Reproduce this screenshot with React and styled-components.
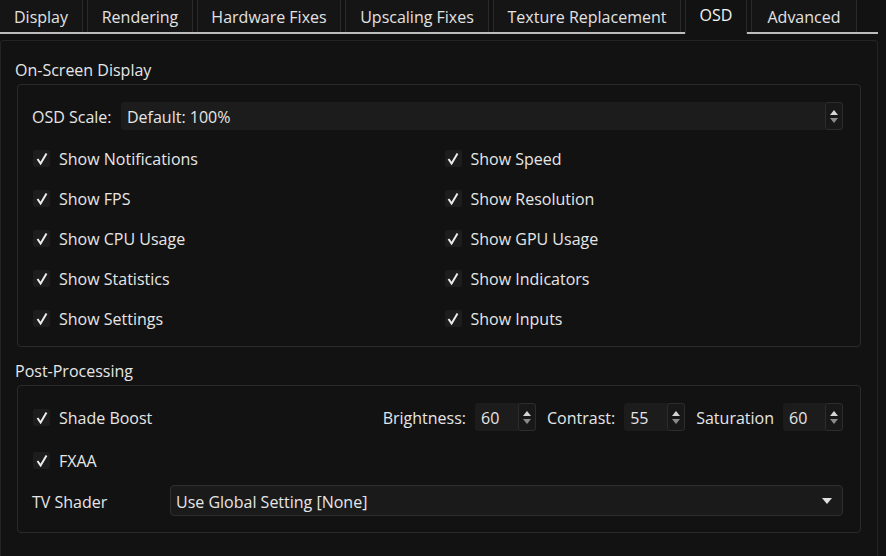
import React from "react";
import styled, { createGlobalStyle } from "styled-components";

const Global = createGlobalStyle`
  html, body { margin: 0; padding: 0; background: #121212; }
  body { font-family: "Open Sans", "Noto Sans", sans-serif; font-size: 16px; color: #e6e6e6; }
  * { box-sizing: border-box; }
`;

const Window = styled.div`
  width: 886px;
  height: 556px;
  overflow: hidden;
  background: #121212;
  display: flex;
  flex-direction: column;
`;

const TabBar = styled.div`
  display: flex;
  align-items: stretch;
  gap: 4px;
  width: 878px;
  height: 34px;
  border-bottom: 2px solid #bdbdbd;
`;

const Tab = styled.div`
  width: ${(p) => p.$w}px;
  display: flex;
  align-items: center;
  justify-content: center;
  padding-top: ${(p) => (p.$active ? 0 : 2)}px;
  padding-bottom: ${(p) => (p.$active ? 4 : 0)}px;
  background: ${(p) => (p.$active ? "#121212" : "#151515")};
  border: 1px solid #2a2a2a;
  border-top: none;
  border-bottom: none;
  margin-bottom: ${(p) => (p.$active ? -2 : 0)}px;
  margin-left: ${(p) => (p.$first ? -1 : 0)}px;
  color: ${(p) => (p.$active ? "#f4f4f4" : "#e2e2e2")};
  white-space: nowrap;
`;

const Panel = styled.div`
  margin-top: 6px;
  width: 878px;
  flex: 1;
  border: 1px solid #242424;
  border-bottom: none;
  border-radius: 4px 4px 0 0;
  padding: 16px 16px 0 16px;
  display: flex;
  flex-direction: column;
`;

const GroupTitle = styled.div`
  height: 24px;
  line-height: 24px;
  padding-top: 1px;
  margin-left: -2px;
  margin-bottom: 3px;
  margin-top: ${(p) => p.$mt || 0}px;
`;

const GroupBox = styled.div`
  border: 1px solid #2a2a2a;
  border-radius: 4px;
  padding: 17px 17px 16px 14px;
  display: flex;
  flex-direction: column;
  gap: ${(p) => p.$gap || 16}px;
`;

const FormRow = styled.div`
  display: flex;
  align-items: center;
  height: ${(p) => p.$h || 28}px;
  margin-top: ${(p) => p.$mt || 0}px;
`;

const Label = styled.span`
  width: ${(p) => (p.$w ? p.$w + "px" : "auto")};
  flex: none;
  padding-top: 2px;
  margin-right: ${(p) => p.$mr || 0}px;
  margin-left: ${(p) => p.$ml || 0}px;
  white-space: nowrap;
`;

const SpinBox = styled.div`
  display: flex;
  height: 28px;
  width: ${(p) => (p.$w ? p.$w + "px" : "auto")};
  flex: ${(p) => (p.$w ? "none" : "1")};
  background: #1c1c1c;
  border-radius: 3px;
`;

const SpinText = styled.div`
  flex: 1;
  display: flex;
  align-items: center;
  padding: 2px 0 0 6px;
`;

const SpinButtons = styled.div`
  width: 18px;
  border: 1px solid #2c2c2c;
  border-radius: 3px;
  background: #181818;
  display: flex;
  flex-direction: column;
  align-items: center;
  justify-content: center;
  gap: 3px;
`;

const Arrow = styled.div`
  width: 0;
  height: 0;
  border-left: 4.5px solid transparent;
  border-right: 4.5px solid transparent;
  ${(p) =>
    p.$up
      ? "border-bottom: 5px solid #d6d6d6;"
      : "border-top: 5px solid #8a8a8a;"}
`;

const CheckGrid = styled.div`
  display: grid;
  grid-template-columns: 1fr 1fr;
  column-gap: 12px;
  row-gap: 16px;
`;

const CheckRow = styled.label`
  display: flex;
  align-items: center;
  height: ${(p) => p.$h || 24}px;
  gap: 9px;
  flex: ${(p) => (p.$grow ? 1 : "none")};
`;

const CheckText = styled.span`
  padding-top: 2px;
  white-space: nowrap;
`;

const CheckBox = styled.span`
  width: 17px;
  height: 17px;
  margin-left: 1px;
  background: #1d1d1d;
  border-radius: 2px;
  display: flex;
  align-items: center;
  justify-content: center;
`;

const Combo = styled.div`
  flex: 1;
  height: 31px;
  border: 1px solid #2e2e2e;
  border-radius: 4px;
  background: #1a1a1a;
  display: flex;
  align-items: center;
  justify-content: space-between;
  padding: 2px 10px 0 5px;
`;

const ComboArrow = styled.div`
  width: 0;
  height: 0;
  margin-top: -2px;
  border-left: 5px solid transparent;
  border-right: 5px solid transparent;
  border-top: 6px solid #e0e0e0;
`;

const Controls = styled.div`
  display: flex;
  align-items: center;
`;

function Check() {
  return (
    <CheckBox>
      <svg width="12" height="13" viewBox="0 0 12 13">
        <path d="M1.5 7 L4.6 11.5 L10.5 1.5" fill="none" stroke="#ededed" strokeWidth="2" strokeLinejoin="miter" />
      </svg>
    </CheckBox>
  );
}

function Spin({ value, w }) {
  return (
    <SpinBox $w={w}>
      <SpinText>{value}</SpinText>
      <SpinButtons>
        <Arrow $up />
        <Arrow />
      </SpinButtons>
    </SpinBox>
  );
}

function CheckItem({ label, h, grow }) {
  return (
    <CheckRow $h={h} $grow={grow}>
      <Check />
      <CheckText>{label}</CheckText>
    </CheckRow>
  );
}

const tabs = [
  ["Display", 84],
  ["Rendering", 106],
  ["Hardware Fixes", 144],
  ["Upscaling Fixes", 144],
  ["Texture Replacement", 188],
  ["OSD", 62],
  ["Advanced", 106],
];

const checks = [
  "Show Notifications",
  "Show Speed",
  "Show FPS",
  "Show Resolution",
  "Show CPU Usage",
  "Show GPU Usage",
  "Show Statistics",
  "Show Indicators",
  "Show Settings",
  "Show Inputs",
];

export default function App() {
  return (
    <Window>
      <Global />
      <TabBar>
        {tabs.map(([t, w], i) => (
          <Tab key={t} $w={w} $active={t === "OSD"} $first={i === 0}>
            {t}
          </Tab>
        ))}
      </TabBar>
      <Panel>
        <GroupTitle>On-Screen Display</GroupTitle>
        <GroupBox>
          <FormRow>
            <Label $w={89}>OSD Scale:</Label>
            <Spin value="Default: 100%" />
          </FormRow>
          <CheckGrid>
            {checks.map((c) => (
              <CheckItem key={c} label={c} />
            ))}
          </CheckGrid>
        </GroupBox>
        <GroupTitle $mt={11}>Post-Processing</GroupTitle>
        <GroupBox $gap={15}>
          <FormRow>
            <CheckItem label="Shade Boost" grow />
            <Controls>
              <Label $mr={9}>Brightness:</Label>
              <Spin value="60" w={61} />
              <Label $mr={9} $ml={11}>Contrast:</Label>
              <Spin value="55" w={61} />
              <Label $mr={9} $ml={11}>Saturation</Label>
              <Spin value="60" w={60} />
            </Controls>
          </FormRow>
          <FormRow>
            <CheckItem label="FXAA" h={28} />
          </FormRow>
          <FormRow $h={31} $mt={-4}>
            <Label $w={138}>TV Shader</Label>
            <Combo>
              <span>Use Global Setting [None]</span>
              <ComboArrow />
            </Combo>
          </FormRow>
        </GroupBox>
      </Panel>
    </Window>
  );
}
